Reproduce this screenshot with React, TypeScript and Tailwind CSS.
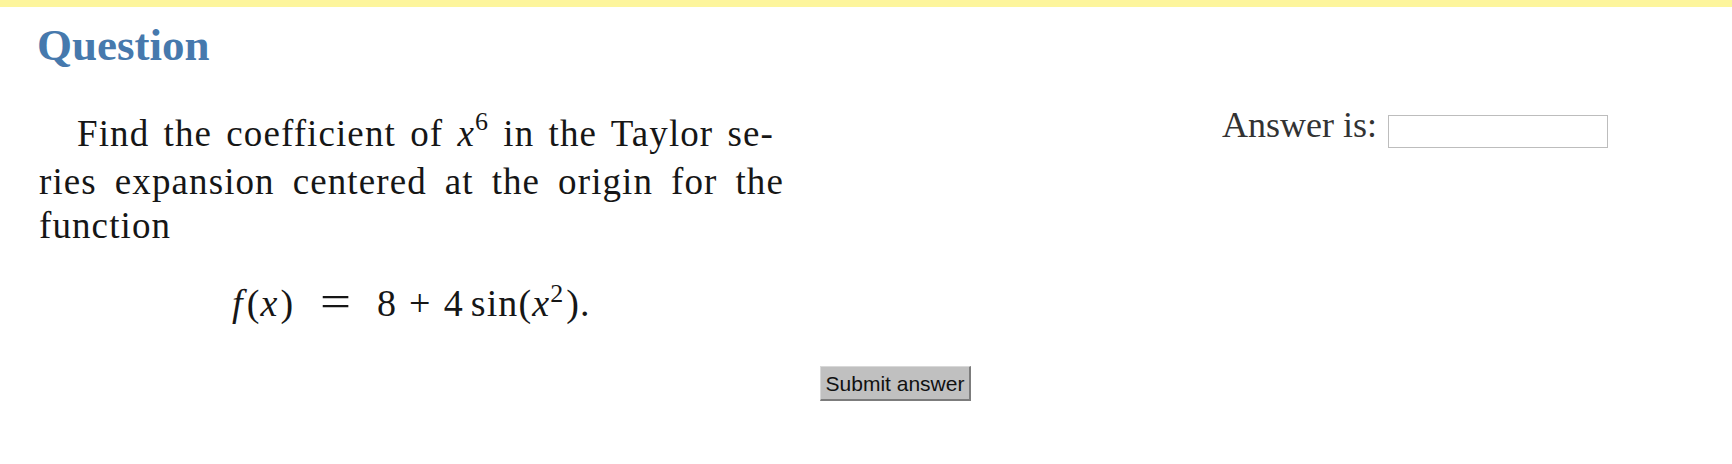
export default function App() {
  const serif = { fontFamily: '"Liberation Serif", "Times New Roman", serif' };
  return (
    <div className="w-[1732px] h-[464px] bg-white overflow-hidden" style={serif}>
      {/* top strip */}
      <div className="h-[7px] bg-[#fdf59c]" />

      <h1 className="mt-[16px] pl-[37px] text-[45px] leading-[45px] font-bold text-[#4679ad]">Question</h1>

      <div className="flex mt-[44px]">
        {/* question text */}
        <div className="ml-[39px] w-[745px] text-[37px] leading-[44px] tracking-[1.1px] text-[#161616]">
          <div className="pl-[38px] pr-[10px] text-justify [text-align-last:justify] whitespace-nowrap">
            Find the coefficient of{" "}
            <span className="italic">
              x<span className="relative -top-[16px] text-[26px] not-italic">6</span>
            </span>{" "}
            in the Taylor se-
          </div>
          <div className="text-justify [text-align-last:justify] whitespace-nowrap">
            ries expansion centered at the origin for the
          </div>
          <div>function</div>

          <div className="mt-[32px] pl-[193px] flex items-baseline whitespace-nowrap text-[38px]">
            <span className="inline-block w-[88px]">
              <span className="italic">f</span>
              <span className="ml-[3px]">(</span>
              <span className="italic">x</span>
              <span className="ml-[2px]">)</span>
            </span>
            <span className="inline-block w-[57px] text-[44px] leading-[44px] scale-x-125 origin-left">=</span>
            <span>8</span>
            <span className="ml-[12px]">+</span>
            <span className="ml-[12px]">4</span>
            <span className="ml-[7px]">sin(</span>
            <span className="italic">x</span>
            <span className="relative -top-[14px] text-[26px]">2</span>
            <span className="ml-[2px]">).</span>
          </div>
        </div>

        {/* answer */}
        <div className="ml-auto mr-[124px] -mt-[5px] flex items-start">
          <span className="text-[36px] leading-[36px] text-[#333333]">Answer is:</span>
          <input
            type="text"
            className="ml-[11px] mt-[8px] w-[220px] h-[33px] border border-[#bdbdbd] bg-white outline-none"
          />
        </div>
      </div>

      <div className="mt-[36px] pl-[820px]">
        <button
          className="w-[151px] h-[35px] bg-[#c0c0c0] border-t border-l border-t-[#d8d8d8] border-l-[#d8d8d8] border-r-2 border-b-2 border-r-[#7c7c7c] border-b-[#7c7c7c] text-[21px] leading-[21px] text-[#111]"
          style={{ fontFamily: '"Liberation Sans", Arial, sans-serif' }}
        >
          Submit answer
        </button>
      </div>
    </div>
  );
}
